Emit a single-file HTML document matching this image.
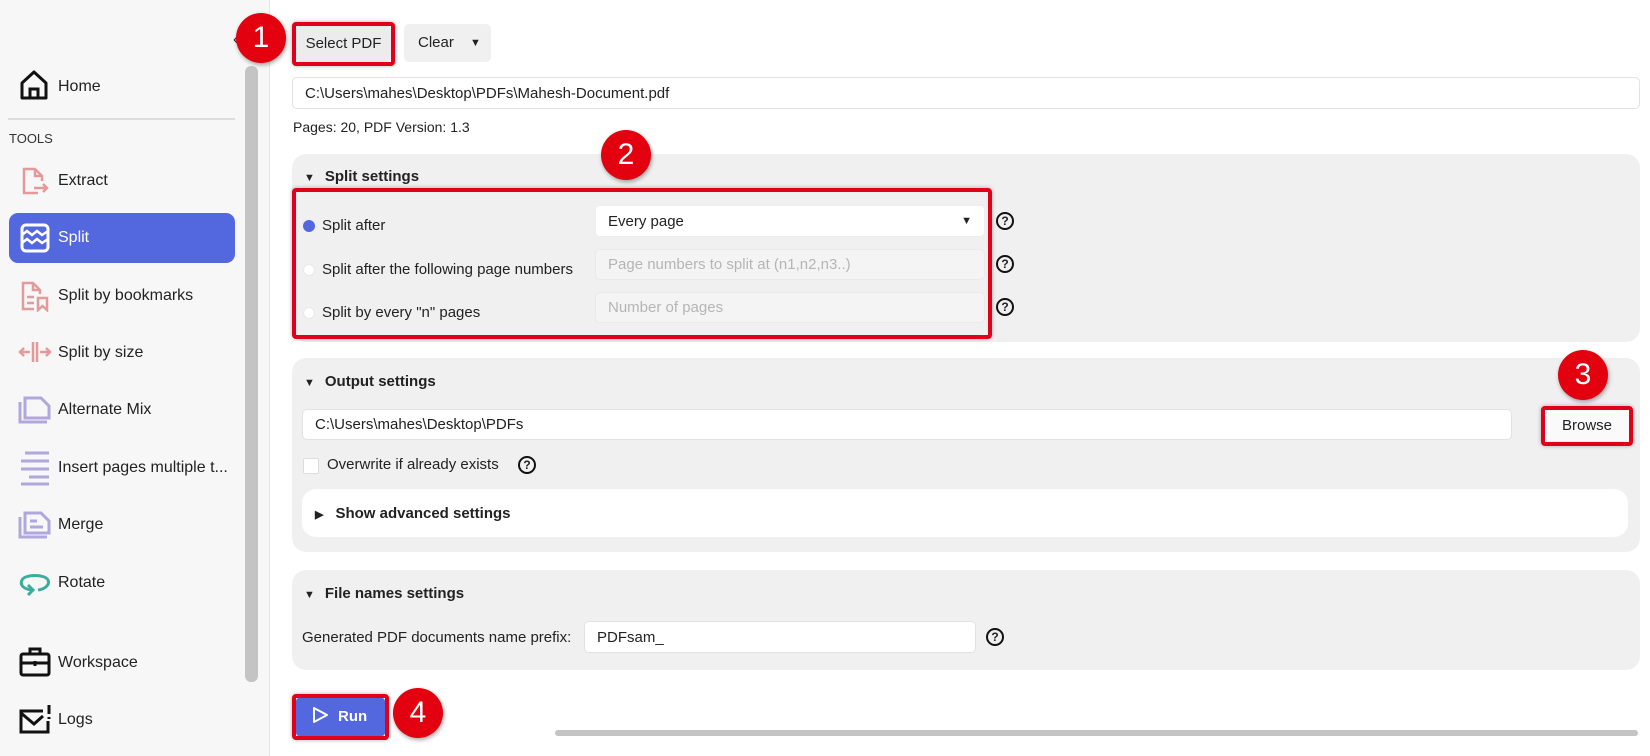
<!DOCTYPE html>
<html><head><meta charset="utf-8"><style>
*{margin:0;padding:0;box-sizing:border-box}
body{width:1650px;height:756px;position:relative;background:#fff;font-family:"Liberation Sans",sans-serif;color:#222;overflow:hidden;font-size:15px}
.a{position:absolute}
.side{left:0;top:0;width:270px;height:756px;background:#f7f7f7;border-right:1px solid #e6e6e6}
.it{position:absolute;left:58px;font-size:16px;color:#222;line-height:20px}
.ic{position:absolute;left:18px}
.panel{position:absolute;left:292px;width:1348px;background:#f0f0f0;border-radius:14px}
.hd{position:absolute;font-weight:bold;font-size:15px;line-height:18px}
.inp{position:absolute;background:#fff;border:1px solid #e2e2e2;border-radius:5px;padding-left:12px;font-size:15px;display:flex;align-items:center}
.ph{background:#f4f4f4;color:#b5b5b5;border-color:#eaeaea}
.q{position:absolute;width:18px;height:18px;border:2px solid #111;border-radius:50%;font-size:12px;font-weight:bold;text-align:center;line-height:14px}
.red{position:absolute;border:4px solid #e0001a;border-radius:4px;box-shadow:0 0 4px rgba(0,0,0,.3)}
.num{position:absolute;width:50px;height:50px;border-radius:50%;background:#e3000f;color:#fff;font-size:30px;text-align:center;line-height:50px;box-shadow:1px 2px 4px rgba(0,0,0,.35)}
.rad{position:absolute;width:12px;height:12px;border-radius:50%;background:#fff;border:1px solid #e8e8e8}
.lbl{position:absolute;font-size:15px;line-height:18px}
</style></head><body>
<div class="a side"></div>
<div class="a" style="left:245px;top:66px;width:13px;height:616px;background:#c4c4c4;border-radius:6px"></div>
<svg class="ic" style="top:68px" width="32" height="34" viewBox="0 0 32 34"><path d="M4 15 L16 4 L28 15 V30 H4 Z" fill="none" stroke="#111" stroke-width="3" stroke-linejoin="round"/><path d="M12 30 V21 H20 V30" fill="none" stroke="#111" stroke-width="3"/></svg>
<div class="it" style="top:77px">Home</div>
<div class="a" style="left:8px;top:118px;width:227px;height:2px;background:#ddd"></div>
<div class="a" style="left:9px;top:131px;font-size:13px;color:#333">TOOLS</div>
<svg class="ic" style="top:166px;left:20px" width="30" height="30" viewBox="0 0 30 30"><path d="M18 27 H4 V3 H15 L22 10 V15" fill="none" stroke="#e39a9a" stroke-width="2.5"/><path d="M15 3 V10 H22 M14 22 H27 M23 18 L27 22 L23 26" fill="none" stroke="#e39a9a" stroke-width="2.5"/></svg>
<div class="it" style="top:171px">Extract</div>
<div class="a" style="left:9px;top:213px;width:226px;height:50px;background:#5368df;border-radius:9px"></div>
<svg class="ic" style="top:222px;left:19px" width="32" height="32" viewBox="0 0 32 32"><rect x="3" y="3" width="26" height="26" rx="4" fill="none" stroke="#fff" stroke-width="3"/><path d="M3 13 L8 9 L13 13 L18 9 L23 13 L29 9 M3 21 L8 17 L13 21 L18 17 L23 21 L29 17" fill="none" stroke="#fff" stroke-width="2.5"/></svg>
<div class="it" style="top:228px;color:#fff">Split</div>
<svg class="ic" style="top:280px;left:20px" width="30" height="32" viewBox="0 0 30 32"><path d="M14 29 H3 V3 H13 L20 10 V14 M13 3 V10 H20 M7 17 H14 M7 23 H14" fill="none" stroke="#e39a9a" stroke-width="2.5"/><path d="M18 18 H27 V30 L22.5 26 L18 30 Z" fill="none" stroke="#e39a9a" stroke-width="2.5"/></svg>
<div class="it" style="top:286px">Split by bookmarks</div>
<svg class="ic" style="top:340px;left:18px" width="34" height="24" viewBox="0 0 34 24"><path d="M15 2 V22 M19 2 V22 M2 12 H12 M6 8 L2 12 L6 16 M22 12 H32 M28 8 L32 12 L28 16" fill="none" stroke="#e39a9a" stroke-width="2.5"/></svg>
<div class="it" style="top:343px">Split by size</div>
<svg class="ic" style="top:394px;left:17px" width="36" height="32" viewBox="0 0 36 32"><path d="M3 8 V28 H30" fill="none" stroke="#b2a7dc" stroke-width="3"/><path d="M8 4 H24 L32 12 V24 H8 Z" fill="none" stroke="#b2a7dc" stroke-width="3"/></svg>
<div class="it" style="top:400px">Alternate Mix</div>
<svg class="ic" style="top:450px;left:19px" width="32" height="36" viewBox="0 0 32 36"><path d="M6 3 H30 M2 11 H30 M2 19 H30 M10 27 H30 M2 34 H30" stroke="#b2a7dc" stroke-width="3"/></svg>
<div class="it" style="top:458px">Insert pages multiple t...</div>
<svg class="ic" style="top:509px;left:17px" width="36" height="32" viewBox="0 0 36 32"><path d="M3 8 V28 H30" fill="none" stroke="#b2a7dc" stroke-width="3"/><path d="M8 4 H24 L32 12 V24 H8 Z M13 12 H20 M13 18 H26" fill="none" stroke="#b2a7dc" stroke-width="3"/></svg>
<div class="it" style="top:515px">Merge</div>
<svg class="ic" style="top:570px;left:18px" width="34" height="26" viewBox="0 0 34 26"><path d="M14 20 C4 19 2 14 4 10 C7 4 27 4 30 10 C32 14 28 19 20 20" fill="none" stroke="#3aae9a" stroke-width="3"/><path d="M10 15 L15 20 L10 25" fill="none" stroke="#3aae9a" stroke-width="3"/></svg>
<div class="it" style="top:573px">Rotate</div>
<svg class="ic" style="top:646px;left:19px" width="32" height="32" viewBox="0 0 32 32"><rect x="2" y="8" width="28" height="21" rx="2" fill="none" stroke="#111" stroke-width="3"/><path d="M11 8 V3 H21 V8 M2 17 H30 M16 15 V20" fill="none" stroke="#111" stroke-width="3"/></svg>
<div class="it" style="top:653px">Workspace</div>
<svg class="ic" style="top:703px;left:19px" width="34" height="32" viewBox="0 0 34 32"><path d="M24 8 H2 V29 H29 V18" fill="none" stroke="#111" stroke-width="3"/><path d="M2 10 L15 21 L24 13" fill="none" stroke="#111" stroke-width="3"/><path d="M30 2 V11 M30 14 V16" stroke="#111" stroke-width="3"/></svg>
<div class="it" style="top:710px">Logs</div>
<div class="a" style="left:233px;top:31px;font-size:16px">&#8249;</div>

<div class="a" style="left:296px;top:26px;width:95px;height:36px;background:#ececec;border-radius:4px;text-align:center;line-height:36px;font-size:15px">Select PDF</div>
<div class="red" style="left:292px;top:22px;width:103px;height:44px"></div>
<div class="a" style="left:404px;top:24px;width:87px;height:38px;background:#f0f0f0;border-radius:5px;line-height:38px;padding-left:14px;font-size:15px">Clear<span style="position:absolute;left:66px;font-size:11px">&#9660;</span></div>
<div class="num" style="left:236px;top:13px">1</div>
<div class="inp" style="left:292px;top:77px;width:1348px;height:32px">C:\Users\mahes\Desktop\PDFs\Mahesh-Document.pdf</div>
<div class="lbl" style="left:293px;top:118px;font-size:14px">Pages: 20, PDF Version: 1.3</div>

<div class="panel" style="top:154px;height:188px"></div>
<div class="hd" style="left:304px;top:168px"><span style="font-size:11px;margin-right:10px">&#9660;</span>Split settings</div>
<div class="rad" style="left:303px;top:220px;background:#5368df;border-color:#5368df"></div>
<div class="lbl" style="left:322px;top:217px">Split after</div>
<div class="rad" style="left:303px;top:264px"></div>
<div class="lbl" style="left:322px;top:261px">Split after the following page numbers</div>
<div class="rad" style="left:303px;top:307px"></div>
<div class="lbl" style="left:322px;top:304px">Split by every "n" pages</div>
<div class="inp" style="left:595px;top:205px;width:390px;height:32px;border-color:#eee">Every page<span style="position:absolute;right:12px;font-size:11px">&#9660;</span></div>
<div class="inp ph" style="left:595px;top:249px;width:390px;height:31px">Page numbers to split at (n1,n2,n3..)</div>
<div class="inp ph" style="left:595px;top:292px;width:390px;height:31px">Number of pages</div>
<div class="q" style="left:996px;top:212px">?</div>
<div class="q" style="left:996px;top:255px">?</div>
<div class="q" style="left:996px;top:298px">?</div>
<div class="red" style="left:292px;top:188px;width:700px;height:151px"></div>
<div class="num" style="left:601px;top:130px">2</div>

<div class="panel" style="top:358px;height:194px"></div>
<div class="hd" style="left:304px;top:373px"><span style="font-size:11px;margin-right:10px">&#9660;</span>Output settings</div>
<div class="inp" style="left:302px;top:409px;width:1210px;height:31px">C:\Users\mahes\Desktop\PDFs</div>
<div class="a" style="left:1545px;top:410px;width:84px;height:31px;background:#fafafa;text-align:center;line-height:31px;font-size:15px">Browse</div>
<div class="red" style="left:1541px;top:406px;width:92px;height:40px"></div>
<div class="num" style="left:1558px;top:350px">3</div>
<div class="a" style="left:303px;top:458px;width:16px;height:16px;background:#fff;border:1px solid #ddd;border-radius:2px"></div>
<div class="lbl" style="left:327px;top:456px">Overwrite if already exists</div>
<div class="q" style="left:518px;top:456px">?</div>
<div class="a" style="left:302px;top:489px;width:1326px;height:48px;background:#fff;border-radius:14px"></div>
<div class="hd" style="left:315px;top:505px"><span style="font-size:11px;margin-right:12px">&#9654;</span>Show advanced settings</div>

<div class="panel" style="top:570px;height:100px"></div>
<div class="hd" style="left:304px;top:585px"><span style="font-size:11px;margin-right:10px">&#9660;</span>File names settings</div>
<div class="lbl" style="left:302px;top:629px">Generated PDF documents name prefix:</div>
<div class="inp" style="left:584px;top:621px;width:392px;height:32px">PDFsam_</div>
<div class="q" style="left:986px;top:628px">?</div>

<div class="a" style="left:296px;top:698px;width:89px;height:38px;background:#5368df;border-radius:3px;color:#fff;font-weight:bold;font-size:15px;line-height:38px;padding-left:14px"><svg width="20" height="20" viewBox="0 0 20 20" style="vertical-align:-4px;margin-right:8px"><path d="M4 3 L17 10 L4 17 Z" fill="none" stroke="#fff" stroke-width="2" stroke-linejoin="round"/></svg>Run</div>
<div class="red" style="left:292px;top:694px;width:97px;height:46px"></div>
<div class="num" style="left:393px;top:688px">4</div>
<div class="a" style="left:555px;top:730px;width:1083px;height:6px;background:#c4c4c4;border-radius:3px"></div>
</body></html>
